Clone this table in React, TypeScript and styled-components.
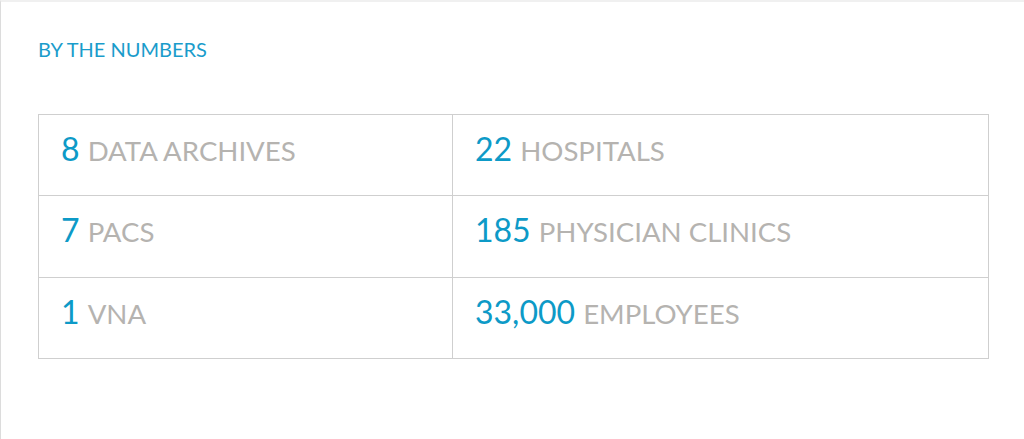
import React from 'react';
import styled, { createGlobalStyle } from 'styled-components';

const GlobalStyle = createGlobalStyle`
  html, body {
    margin: 0;
    padding: 0;
    background: #fff;
  }
  body {
    font-family: Lato, "Open Sans", sans-serif;
  }
`;

const Page = styled.div`
  box-sizing: border-box;
  width: 1024px;
  height: 439px;
  border-top: 2px solid #f0f0f0;
  border-left: 1px solid #dcdcdc;
  padding: 35px 35px 0 37px;
`;

const Heading = styled.h3`
  margin: 0 0 53px;
  font-size: 20px;
  font-weight: 400;
  line-height: 24px;
  color: #1a9ccb;
  text-transform: uppercase;
`;

const Table = styled.div`
  display: grid;
  grid-template-columns: 414px 1fr;
  grid-auto-rows: 81.4px;
  border-top: 1px solid #cfcfcf;
  border-left: 1px solid #cfcfcf;
`;

const Cell = styled.div`
  box-sizing: border-box;
  padding: 14px 22px 0;
  border-right: 1px solid #cfcfcf;
  border-bottom: 1px solid #cfcfcf;
  line-height: 40px;
  white-space: nowrap;
`;

const Value = styled.span`
  margin-right: 4px;
  font-size: 32px;
  color: #0d9ac7;
`;

const Label = styled.span`
  font-size: 27.6px;
  color: #b5b3b0;
`;

const stats = [
  { value: '8', label: 'DATA ARCHIVES' },
  { value: '22', label: 'HOSPITALS' },
  { value: '7', label: 'PACS' },
  { value: '185', label: 'PHYSICIAN CLINICS' },
  { value: '1', label: 'VNA' },
  { value: '33,000', label: 'EMPLOYEES' },
];

const App = () => (
  <>
    <GlobalStyle />
    <Page>
      <Heading>By the numbers</Heading>
      <Table>
        {stats.map((s) => (
          <Cell key={s.label}>
            <Value>{s.value}</Value> <Label>{s.label}</Label>
          </Cell>
        ))}
      </Table>
    </Page>
  </>
);

export default App;
